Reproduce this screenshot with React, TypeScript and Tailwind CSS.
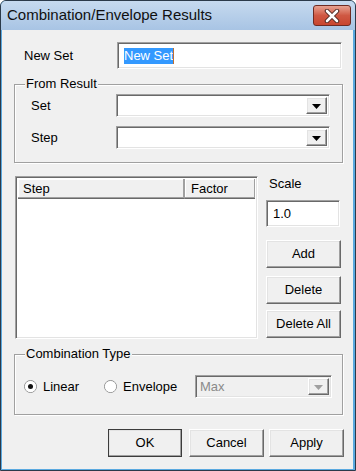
import React from "react";

const sunken =
  "border border-t-[#a0a0a0] border-l-[#a0a0a0] border-r-white border-b-white shadow-[inset_1px_1px_0_#696969,inset_-1px_-1px_0_#e3e3e3]";
const raised =
  "border border-t-white border-l-white border-r-[#696969] border-b-[#696969] shadow-[inset_-1px_-1px_0_#a0a0a0,inset_1px_1px_0_#e3e3e3] bg-[#f0f0f0]";

function Arrow({ color = "#000" }: { color?: string }) {
  return (
    <svg width="9" height="5" viewBox="0 0 9 5">
      <path d="M0 0 H9 L4.5 5 Z" fill={color} />
    </svg>
  );
}

function Combo({ width, disabled, text }: { width: string; disabled?: boolean; text?: string }) {
  return (
    <div className={`${sunken} ${width} h-[23px] flex p-[2px] ${disabled ? "bg-[#f0f0f0]" : "bg-white"}`}>
      <div className={`flex-1 flex items-center pl-[2px] ${disabled ? "text-[#8a8a8a]" : ""}`}>{text}</div>
      <div className={`${raised} w-[21px] h-full flex items-center justify-center pt-[1px]`}>
        <Arrow color={disabled ? "#a0a0a0" : "#000"} />
      </div>
    </div>
  );
}

function Radio({ checked }: { checked?: boolean }) {
  return (
    <div className="w-[13px] h-[13px] rounded-full border border-[#8e8f8f] bg-gradient-to-br from-[#d8d8d8] to-white flex items-center justify-center">
      <div className="w-[11px] h-[11px] rounded-full bg-white flex items-center justify-center">
        {checked && <div className="w-[5px] h-[5px] rounded-full bg-[#111]" />}
      </div>
    </div>
  );
}

function Group({ title, className, children }: { title: string; className: string; children: React.ReactNode }) {
  return (
    <div className={`relative border border-[#a0a0a0] shadow-[inset_1px_1px_0_#fff,1px_1px_0_#fff] ${className}`}>
      <span className="absolute left-[10px] -top-[9px] bg-[#f0f0f0] px-[1px] leading-[16px]">{title}</span>
      {children}
    </div>
  );
}

export default function App() {
  return (
    <div className="w-[356px] h-[471px] bg-[#5aa9e0] border border-[#2b3a4a] rounded-t-[6px] flex flex-col overflow-hidden font-['Liberation_Sans',Arial,sans-serif] text-[13px] text-black">
      <div className="h-[29px] shrink-0 bg-gradient-to-b from-[#c6daef] to-[#a8c4e4] flex items-center justify-between pl-[6px] pr-[4px]">
        <span className="text-[15px] text-[#101010]">Combination/Envelope Results</span>
        <div className="w-[38px] h-[21px] rounded-[3px] border border-[#6e2b23] bg-gradient-to-b from-[#e6a191] via-[#cf5843] to-[#c8452f] flex items-center justify-center">
          <svg width="16" height="14" viewBox="0 0 16 14">
            <path d="M3 2 L13 12 M13 2 L3 12" stroke="#4a2520" strokeWidth="4.5" strokeLinecap="round" />
            <path d="M3 2 L13 12 M13 2 L3 12" stroke="#ffffff" strokeWidth="2.6" strokeLinecap="round" />
          </svg>
        </div>
      </div>
      <div className="flex-1 ml-[1px] mr-[2px] mb-[1px] bg-[#f0f0f0] flex flex-col">
        <div className="mt-[12px] flex items-center h-[27px]">
          <div className="pl-[22px] w-[115px]">New Set</div>
          <div className={`${sunken} w-[225px] h-[27px] bg-white flex items-center pl-[6px]`}>
            <span className="bg-[#3399ff] text-white leading-[16px]">New Set</span>
            <span className="w-[1px] h-[16px] bg-[#c07030]" />
          </div>
        </div>

        <Group title="From Result" className="mt-[15px] ml-[12px] w-[329px] h-[79px]">
          <div className="mt-[9px] flex items-center h-[23px]">
            <div className="pl-[16px] w-[101px]">Set</div>
            <Combo width="w-[214px]" />
          </div>
          <div className="mt-[9px] flex items-center h-[23px]">
            <div className="pl-[16px] w-[101px]">Step</div>
            <Combo width="w-[214px]" />
          </div>
        </Group>

        <div className="mt-[13px] flex">
          <div className={`${sunken} ml-[13px] w-[243px] h-[163px] bg-white p-[2px] flex flex-col`}>
            <div className="flex h-[20px]">
              <div className="w-[167px] h-full bg-[#f0f0f0] border-r border-b border-r-[#a0a0a0] border-b-[#696969] shadow-[inset_-1px_-1px_0_#a0a0a0,inset_1px_1px_0_#fff] flex items-center pl-[5px]">
                Step
              </div>
              <div className="flex-1 h-full bg-[#f0f0f0] border-b border-b-[#696969] shadow-[inset_-1px_-1px_0_#a0a0a0,inset_1px_1px_0_#fff] flex items-center pl-[6px]">
                Factor
              </div>
            </div>
          </div>
          <div className="ml-[8px] w-[76px] flex flex-col">
            <div className="h-[16px] leading-[16px] pl-[3px] mb-[8px]">Scale</div>
            <div className={`${sunken} w-[74px] h-[27px] bg-white flex items-center pl-[6px]`}>1.0</div>
            <button className={`${raised} mt-[13px] w-[75px] h-[28px] flex items-center justify-center`}>Add</button>
            <button className={`${raised} mt-[8px] w-[75px] h-[28px] flex items-center justify-center`}>Delete</button>
            <button className={`${raised} mt-[6px] w-[75px] h-[28px] flex items-center justify-center`}>Delete All</button>
          </div>
        </div>

        <Group title="Combination Type" className="mt-[15px] ml-[12px] w-[329px] h-[61px]">
          <div className="mt-[20px] flex items-center h-[23px] pl-[9px]">
            <div className="w-[80px] flex items-center gap-[6px]">
              <Radio checked />
              <span>Linear</span>
            </div>
            <div className="w-[91px] flex items-center gap-[6px]">
              <Radio />
              <span>Envelope</span>
            </div>
            <Combo width="w-[137px]" disabled text="Max" />
          </div>
        </Group>

        <div className="mt-[14px] flex">
          <button className={`${raised} ml-[106px] w-[74px] h-[28px] flex items-center justify-center outline outline-1 outline-[#3c3c3c] -outline-offset-1`}>OK</button>
          <button className={`${raised} ml-[7px] w-[75px] h-[28px] flex items-center justify-center`}>Cancel</button>
          <button className={`${raised} ml-[5px] w-[75px] h-[28px] flex items-center justify-center`}>Apply</button>
        </div>
      </div>
    </div>
  );
}
